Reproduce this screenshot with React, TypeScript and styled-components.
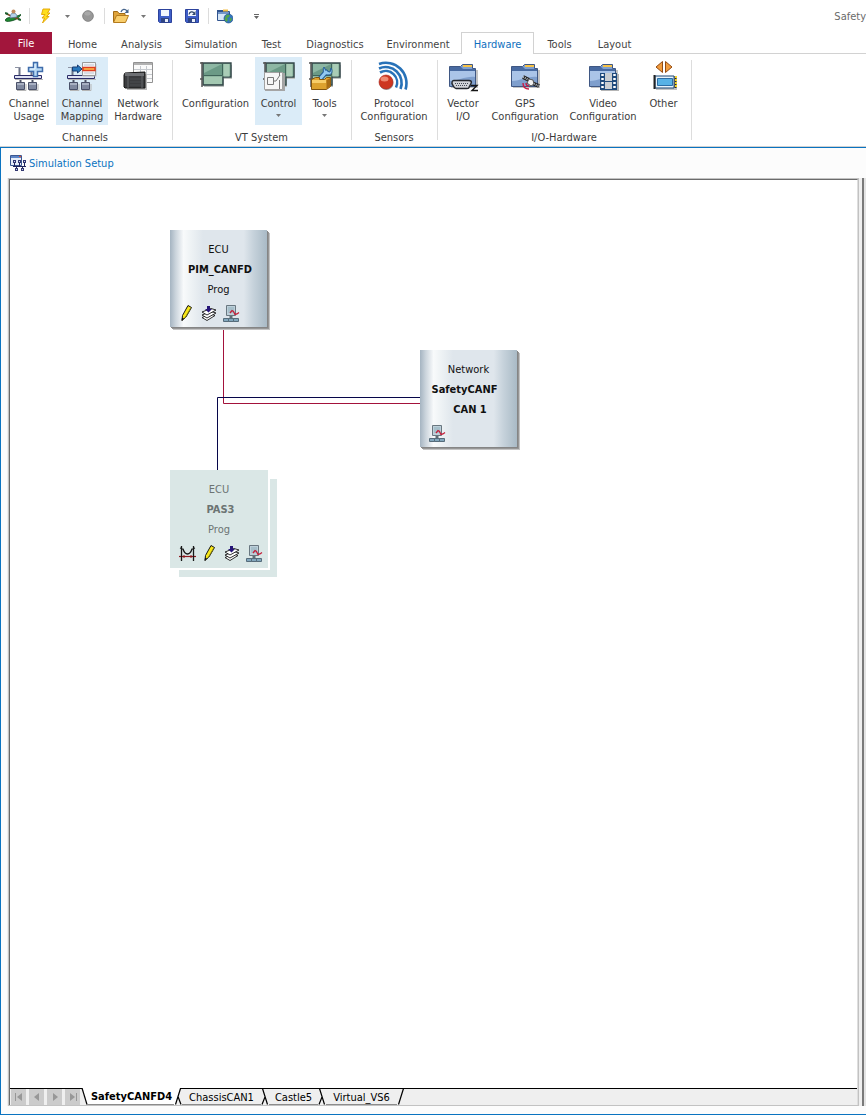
import React from "react";
import styled, { createGlobalStyle } from "styled-components";

const GlobalStyle = createGlobalStyle`
  *, *::before, *::after { box-sizing: border-box; }
  body {
    margin: 0;
    background: #ffffff;
    color: #3b3b3b;
    font-family: "DejaVu Sans Condensed", "Noto Sans", sans-serif;
    font-size: 11px;
    line-height: 13px;
    overflow-x: hidden;
  }
  button {
    margin: 0;
    padding: 0;
    border: 0;
    background: transparent;
    color: inherit;
    font: inherit;
  }
  svg { display: block; flex: none; }
`;

const Page = styled.div`
  display: flex;
  flex-direction: column;
  min-height: 100vh;
`;

/* ---------- Quick access bar ---------- */

const TitleBar = styled.header`
  display: flex;
  align-items: center;
  height: 32px;
  padding-left: 4px;
`;

const QuickGroup = styled.div<{ $gap?: number }>`
  display: flex;
  align-items: center;
  gap: ${(p) => p.$gap ?? 0}px;
`;

const QuickButton = styled.button<{ $narrow?: boolean }>`
  display: flex;
  align-items: center;
  justify-content: center;
  width: ${(p) => (p.$narrow ? 8 : 18)}px;
  height: 20px;
`;

const QuickDivider = styled.span`
  width: 1px;
  height: 16px;
  margin: 0 7px;
  background: #dcdcdc;
`;

const CustomizeButton = styled(QuickButton)`
  margin-left: 18px;
`;

const WindowTitle = styled.h1`
  margin: 0 0 0 auto;
  color: #6a6a6a;
  font-size: 11px;
  font-weight: 400;
  white-space: nowrap;
`;

/* ---------- Ribbon ---------- */

const TabStrip = styled.nav`
  display: flex;
  height: 22px;
  border-bottom: 1px solid #d2d2d2;
`;

const FileTab = styled.button`
  width: 52px;
  height: 22px;
  margin-right: 4px;
  background: #a2163c;
  color: #ffffff;
`;

const RibbonTab = styled.button<{ $width: number; $active?: boolean }>`
  width: ${(p) => p.$width}px;
  height: 22px;
  padding-top: 2px;
  border: ${(p) => (p.$active ? "1px solid #d2d2d2" : "0")};
  border-bottom: 0;
  background: ${(p) => (p.$active ? "#ffffff" : "transparent")};
  color: ${(p) => (p.$active ? "#0e6fbe" : "#444444")};
  white-space: nowrap;
`;

const Ribbon = styled.div`
  display: flex;
  height: 93px;
  padding: 3px 0 2px 3px;
  border-bottom: 1px solid #d0d0d0;
`;

const RibbonGroup = styled.section<{ $inset?: number }>`
  display: flex;
  flex-direction: column;
  justify-content: space-between;
  padding: 0 6px 0 ${(p) => p.$inset ?? 4}px;
  position: relative;

  &::after {
    content: "";
    position: absolute;
    top: 3px;
    bottom: 4px;
    right: 0;
    width: 1px;
    background: #dddddd;
  }
`;

const GroupButtons = styled.div`
  display: flex;
  gap: 1px;
`;

const GroupLabel = styled.h2`
  margin: 0;
  font-size: 11px;
  font-weight: 400;
  line-height: 13px;
  text-align: center;
`;

const CommandButton = styled.button<{ $width: number; $lit?: boolean }>`
  display: flex;
  flex-direction: column;
  align-items: center;
  width: ${(p) => p.$width}px;
  height: 68px;
  padding-top: 4px;
  background: ${(p) => (p.$lit ? "#dbecf8" : "transparent")};
`;

const CommandText = styled.span`
  margin-top: 4px;
  line-height: 13px;
  white-space: pre;
  text-align: center;
`;

const CommandCaret = styled.span`
  margin-top: 4px;
`;

/* ---------- Simulation window ---------- */

const SetupWindow = styled.main`
  display: flex;
  flex: 1;
  flex-direction: column;
  margin-bottom: 1px;
  border: 1px solid #0a73c0;
  border-right: 0;
  background: #fcfcfc;
`;

const WindowCaption = styled.h2`
  display: flex;
  align-items: center;
  gap: 3px;
  height: 30px;
  margin: 0;
  padding-left: 9px;
  color: #0a73c0;
  font-size: 11px;
  font-weight: 400;
`;

const Workspace = styled.div`
  display: flex;
  flex: 1;
  margin: 0 0 8px 6px;
  background: #efefef;
`;

const Pane = styled.div`
  display: flex;
  flex: 1;
  flex-direction: column;
  min-width: 0;
  border-top: 2px solid #6b6b6b;
  border-left: 2px solid #6b6b6b;
  border-right: 2px solid #dedede;
  border-bottom: 1px solid #dedede;
  outline: 1px solid #c2c2c2;
  outline-offset: -1px;
  margin-left: 1px;
`;

const SidePane = styled.div`
  width: 4px;
  margin-left: 3px;
  border-left: 2px solid #7a7a7a;
  background: #e4e4e4;
`;

const Canvas = styled.div`
  position: relative;
  flex: 1;
  min-height: 480px;
  border-bottom: 1px solid #000000;
  background: #ffffff;
`;

const Wires = styled.svg`
  position: absolute;
  top: 0;
  left: 0;
`;

const Node = styled.article<{ $x: number; $y: number; $muted?: boolean }>`
  position: absolute;
  left: ${(p) => p.$x}px;
  top: ${(p) => p.$y}px;
  display: flex;
  flex-direction: column;
  width: ${(p) => (p.$muted ? 98 : 97)}px;
  height: ${(p) => (p.$muted ? 98 : 97)}px;
  padding-top: 10px;
  text-align: center;
  color: ${(p) => (p.$muted ? "#6c7473" : "#101010")};
  background: ${(p) =>
    p.$muted
      ? "#dae7e6"
      : "linear-gradient(90deg, #a5b4c1 0%, #ccd5dd 6%, #f8fafb 14%, #f0f4f6 20%, #dfe6ec 34%, #dfe6ec 76%, #c6d2db 86%, #a9bac6 100%)"};
  box-shadow: ${(p) =>
    p.$muted
      ? "2px 2px 0 #ffffff, 9px 9px 0 #dae7e6"
      : "1px 1px 0 #858585, 2px 2px 0 #969696, 3px 3px 0 #c4c4c4"};
`;

const NodeLine = styled.span<{ $strong?: boolean; $truncated?: boolean }>`
  height: 20px;
  line-height: 20px;
  padding-left: ${(p) => (p.$strong && !p.$truncated ? 3 : 0)}px;
  padding-right: ${(p) => (p.$truncated ? 8 : 0)}px;
  font-weight: ${(p) => (p.$strong ? 700 : 400)};
  white-space: nowrap;
`;

const NodeIcons = styled.div`
  display: flex;
  gap: 6px;
  margin-top: 5px;
  padding-left: 9px;
`;

/* ---------- Sheet tabs ---------- */

const SheetBar = styled.div`
  display: flex;
  height: 16px;
  padding-left: 1px;
`;

const Pager = styled.div`
  display: flex;
  gap: 3px;
  margin-right: 1px;
`;

const PagerButton = styled.button`
  display: flex;
  align-items: center;
  justify-content: center;
  width: 15px;
  height: 16px;
  background: #cbcbcb;
`;

const SheetTab = styled.button<{ $width: number; $active?: boolean }>`
  position: relative;
  width: ${(p) => p.$width}px;
  height: ${(p) => (p.$active ? 17 : 16)}px;
  margin-top: ${(p) => (p.$active ? -1 : 0)}px;
  padding-top: 1px;
  border-bottom: 1px solid #8c8c8c;
  background: ${(p) => (p.$active ? "#ffffff" : "transparent")};
  color: #000000;
  font-weight: ${(p) => (p.$active ? 700 : 400)};
  white-space: nowrap;
`;

const Slant = styled.svg`
  position: relative;
  margin-top: -1px;
`;

/* ---------- Small icons ---------- */

const Caret = () => (
  <svg width="5" height="3" viewBox="0 0 5 3" aria-hidden="true">
    <path d="M0 0h5L2.500 3z" fill="#777" />
  </svg>
);

const CustomizeIcon = () => (
  <svg width="5" height="5" viewBox="0 0 5 5" aria-hidden="true">
    <path d="M0 0h5v1H0zM0 2h5L2.500 5z" fill="#666" />
  </svg>
);

const KayakIcon = () => (
  <svg width="16" height="16" viewBox="0 0 16 16" aria-hidden="true">
    <path d="M0 12.500C1 10 3 9.500 6 9.500S12 8 16 6.500C15 9 12 11.500 8 12.500S2 14 0 12.500z" fill="#1f8a32" stroke="#0c4a1b" strokeWidth=".8" />
    <path d="M1 5.500l4 2 6 2.500 4 1.500" stroke="#7a4423" strokeWidth="1.400" fill="none" />
    <path d="M0 5l3 1M13 11l3 1" stroke="#1d6130" strokeWidth="2" />
    <path d="M5 10c0-3 1-5 3.500-5S12 7 12 9z" fill="#b5d2ea" stroke="#53718c" strokeWidth=".7" />
    <circle cx="8.500" cy="3.500" r="2" fill="#c08a5d" />
  </svg>
);

const BoltIcon = () => (
  <svg width="16" height="16" viewBox="0 0 16 16" aria-hidden="true">
    <path d="M5 1h7L9.500 5H12L8.500 8.500H11L4.500 15l2-5H4l3-3.500H3.500z" fill="#ffdf1c" stroke="#e2a300" strokeWidth=".9" />
  </svg>
);

const RecordIcon = () => (
  <svg width="16" height="16" viewBox="0 0 16 16" aria-hidden="true">
    <circle cx="8" cy="8" r="5.300" fill="#989898" stroke="#858585" />
    <ellipse cx="7.500" cy="5.500" rx="3" ry="2" fill="#a9a9a9" />
  </svg>
);

const OpenIcon = () => (
  <svg width="18" height="16" viewBox="0 0 18 16" aria-hidden="true">
    <path d="M1.500 14V3.500h4l1.500 2h6V8" fill="#dfa33a" stroke="#a16b16" />
    <path d="M1.500 14.500L4.500 7.500h12l-3 7z" fill="#f8cd6b" stroke="#b47b1d" />
    <path d="M9 4c1-3 4-3.500 6-1" fill="none" stroke="#47658c" strokeWidth="1.300" />
    <path d="M16.500 1v4h-4z" fill="#47658c" />
  </svg>
);

const SaveIcon = ({ refresh }: { refresh?: boolean }) => (
  <svg width="16" height="16" viewBox="0 0 16 16" aria-hidden="true">
    <path d="M1.500 1.500h13v13h-12l-1-1z" fill="#3f5fc8" stroke="#2c429c" />
    <path d="M4 2h8v6H4z" fill="#f2f6fd" />
    <path d="M4 10h8v4.500H4z" fill="#2f4583" />
    <path d="M8 11h3v3H8z" fill="#e8eefa" />
    {refresh && (
      <>
        <path d="M5 6.500C5.500 3.500 8.500 3 10 5" fill="none" stroke="#30476b" strokeWidth="1.200" />
        <path d="M11.500 3v4H8z" fill="#30476b" />
      </>
    )}
  </svg>
);

const GlobeWindowIcon = () => (
  <svg width="16" height="16" viewBox="0 0 16 16" aria-hidden="true">
    <path d="M.5 3.500h12v9H.5z" fill="#d7e6f7" stroke="#31548f" />
    <path d="M0 2h6v2H0z" fill="#31548f" />
    <path d="M6 1.500h5v2H6z" fill="#f2bd45" />
    <path d="M1 4h11v2H1z" fill="#7396c9" />
    <circle cx="11.500" cy="10.500" r="4.500" fill="#3477bf" stroke="#1e4c84" strokeWidth=".6" />
    <path d="M9 7.500l2-1 2 1-1.500 2L10 10l1 2-1.500 2-2-2.500zM13 10l2 .5-1 2.500-1.500.5z" fill="#53a748" />
  </svg>
);

const SetupIcon = () => (
  <svg width="16" height="16" viewBox="0 0 16 16" aria-hidden="true">
    <path d="M.5.500h11v10H.5z" fill="#e6edf8" stroke="#3b5790" />
    <path d="M1 1h10v2H1z" fill="#5d84c6" />
    <path d="M9 1h2v1H9z" fill="#e64b2b" />
    <path d="M4.500 8v3M9.500 8v3M14.500 8v3M3 11.500h13M6.500 12v2M12.500 12v2" stroke="#20245c" />
    <path d="M3 5h3v3H3zM8 5h3v3H8zM13 5h3v3h-3zM5 13h3v3H5zM11 13h3v3h-3z" fill="#323771" />
    <path d="M4 6h1v1H4zM9 6h1v1H9zM14 6h1v1h-1zM6 14h1v1H6zM12 14h1v1h-1z" fill="#cbd4ef" />
  </svg>
);

/* ---------- Ribbon icons ---------- */

const BusBase = () => (
  <g>
    <path d="M6.500 6v9M18.500 6v9" stroke="#6d7387" strokeWidth="2" fill="none" />
    <path d="M7.500 17v4M19.500 17v4" stroke="#4c5266" strokeWidth="2" fill="none" />
    <path d="M2 6.500h5" stroke="#8d93a3" strokeWidth="1" />
    <path d="M2 18.500h28" stroke="#b5b5b5" />
    <path d="M1.500 14.500h27v3h-27z" fill="#dfe3f4" stroke="#2b2d68" />
    <path d="M4 29.500h9V23M16 29.500h9V23" fill="none" stroke="#b5b5b5" />
    <path d="M3.500 21.500h8v7h-8zM15.500 21.500h8v7h-8z" fill="#8089a0" stroke="#4a5169" />
    <path d="M4 22h7v2H4zM16 22h7v2h-7z" fill="#a8b0c2" />
  </g>
);

const ChannelUsageIcon = () => (
  <>
    <BusBase />
    <path d="M20.500 1.500h4v5h5v4h-5v5h-4v-5h-5v-4h5z" fill="#b7d9f4" stroke="#3f6cab" strokeWidth="1.500" />
    <path d="M22 3v5h-5" fill="none" stroke="#ecf7ff" />
  </>
);

const ChannelMappingIcon = () => (
  <>
    <BusBase />
    <path d="M17 3h13.500v12.500H17z" fill="#bcc3cb" />
    <path d="M16.500 1.500h13v13h-13z" fill="#f3f4f7" stroke="#9b9b9b" />
    <path d="M18 4h10M18 12h10" stroke="#bfc5d1" />
    <path d="M17 6.500h12v3H17z" fill="#ffc24a" stroke="#df3e20" strokeWidth="1.500" />
    <path d="M6.500 6h5V4l4.500 4-4.500 4v-2h-5z" fill="#2978bd" stroke="#173d74" />
  </>
);

const NetworkHardwareIcon = () => (
  <>
    <path d="M11.500 1.500h19v20h-19z" fill="#fafafa" stroke="#929292" />
    <path d="M12 2h18v2H12z" fill="#b1b1b1" />
    <path d="M12 8.500h18M12 13.500h18M12 17.500h18M18.500 5v16M24.500 5v16" stroke="#c5c9ce" />
    <path d="M5 13h20v16H5z" fill="#b9b9b9" />
    <path d="M3 12l20-1v16H3l-1-1V14z" fill="#3b3c3f" stroke="#151515" />
    <path d="M6 12v15M20 12v15" stroke="#66686c" />
    <path d="M3 12h19v3H3z" fill="#6e7074" />
    <path d="M8 18h11M8 21h11M8 24h11" stroke="#4a4c50" />
  </>
);

const Board = () => (
  <g>
    <path d="M4 4h28v14h-8v8H4z" fill="#bfc4c1" />
    <path d="M3 2h28v14h-8v8H3z" fill="#7aa68f" stroke="#34474a" strokeWidth="1.400" />
    <path d="M4 3h18v11H4z" fill="#6b9a86" />
    <path d="M4 3h18L4 12z" fill="#8db7a3" />
    <path d="M23.500 3v12.500h6V3z" fill="#a9ccb6" />
    <path d="M4 15.500h18v7.500H4z" fill="#a3c8b1" />
    <path d="M4 14.500h18.500V3" fill="none" stroke="#3f6459" />
    <path d="M0 2h3M2 1v25M0 18h3" stroke="#555" strokeWidth="1.500" fill="none" />
  </g>
);

const ControlBoardIcon = () => (
  <>
    <Board />
    <path d="M2 12h20v18H2z" fill="#a5a5a5" />
    <path d="M1.500 11.500h18v17h-18z" fill="#f6f6f6" stroke="#a2a2a2" />
    <path d="M4.500 16.500h6v7h-6zM10 20h3l4-6M16.500 19v9M16.500 11v4" fill="none" stroke="#777" />
  </>
);

const ToolsBoardIcon = () => (
  <>
    <Board />
    <path d="M10 19l7-8" stroke="#235c97" strokeWidth="5" strokeLinecap="round" />
    <path d="M15 6l2 4 4 1 1-4c2 3 1 7-3 7s-6-4-4-8z" fill="#92caf1" stroke="#235c97" />
    <path d="M10 19l7-8" stroke="#92caf1" strokeWidth="3" strokeLinecap="round" />
    <path d="M2.500 18.500l4-2h4v2h5l2-2h4v9l-4 3h-15z" fill="#dda22e" stroke="#815510" />
    <path d="M3 19h14v3H3z" fill="#f8ce69" />
    <path d="M17.500 19v9l4-3v-8z" fill="#a96d14" />
  </>
);

const ProtocolIcon = () => (
  <>
    <g fill="none" stroke="#2872b8" strokeWidth="2.600">
      <path d="M2 11.500A11.500 11.500 0 0 1 18 26.500" />
      <path d="M1 7.500A16 16 0 0 1 22.500 28" />
      <path d="M1 3A20.500 20.500 0 0 1 27.500 28.500" />
    </g>
    <circle cx="8.500" cy="22" r="7" fill="#a1a1a1" />
    <circle cx="8" cy="21" r="7" fill="#cd3620" stroke="#a8231a" strokeWidth=".6" />
    <ellipse cx="6.500" cy="18" rx="4" ry="2.500" fill="#ed8a72" />
  </>
);

const Folder = () => (
  <g>
    <path d="M4 9h27v18H4z" fill="#c4c4c4" />
    <path d="M2.500 25.500V5.500h11l2-2h10v4h3v18z" fill="#7f9fcd" stroke="#3f5783" />
    <path d="M16 4h9v2h-9z" fill="#f6c247" />
    <path d="M3 6h11l2 2h12v2H3z" fill="#486aa1" />
    <path d="M3 10h25v6C18 15 12 20 3 20z" fill="#aac4e8" />
  </g>
);

const VectorIoIcon = () => (
  <>
    <Folder />
    <path d="M7 19.500h15c2 0 3 1 2 3l-2 4c0 1-1 1-2 1H9c-1 0-2-1-3-3l-1-2c0-2 0-3 2-3z" fill="#d1d3d8" stroke="#24272d" strokeWidth="1.500" />
    <path d="M8 22.500h14M9 24.500h12" stroke="#444955" strokeDasharray="1 1" />
    <path d="M24 24.500h6l-5 5h6" fill="none" stroke="#151515" strokeWidth="1.400" />
  </>
);

const GpsIcon = () => (
  <>
    <Folder />
    <path d="M14 16l6 3M23 22l7 3" stroke="#222" strokeWidth="4" />
    <path d="M14 16l6 3M23 22l7 3" stroke="#b8c0cc" strokeWidth="2" strokeDasharray="1 1" />
    <path d="M20 18l4 1 1 4-3 2-4-3z" fill="#f2f2f2" stroke="#555" />
    <path d="M14 22c0 4 2 6 6 6M17 22c0 2 1 3 3 3" fill="none" stroke="#c71e47" strokeWidth="1.400" />
  </>
);

const VideoIcon = () => (
  <>
    <Folder />
    <path d="M14 13h18v17H14z" fill="#b5b5b5" />
    <path d="M13 12h17v17H13z" fill="#204a7c" />
    <path d="M18 12h7v8h-7zM18 21h7v7h-7z" fill="#c9cdd2" />
    <path d="M15.500 13v16M27.500 13v16" stroke="#fff" strokeWidth="2.500" strokeDasharray="2 2" />
  </>
);

const OtherIcon = () => (
  <>
    <path d="M14.500.500v11L8 6zM17.500.500v11L24 6z" fill="#f29c3d" stroke="#924b14" />
    <path d="M8 17h21v12H8z" fill="#c4c4c4" />
    <path d="M7 15h19v12H7z" fill="#e8f3fb" stroke="#1b4775" />
    <path d="M9.500 17.500h15v7h-15z" fill="#58b2e6" stroke="#2b6da5" />
    <path d="M6.500 14v14" stroke="#222" strokeWidth="2" />
    <path d="M27.500 15v12" stroke="#2b2b2b" strokeWidth="2" />
    <path d="M28 15v12" stroke="#f3d329" strokeWidth="2" strokeDasharray="2 1" />
  </>
);

/* ---------- Node icons ---------- */

const PencilIcon = () => (
  <svg width="16" height="16" viewBox="0 0 16 16" aria-label="Edit">
    <path d="M9 .500l3.500 2L7 12l-4 3.500.500-5z" fill="#f8e719" stroke="#161616" />
    <path d="M11.500 3.500L6 13" stroke="#858013" />
    <path d="M3 12.500l2 1-2.500 2.500z" fill="#111" />
  </svg>
);

const StackIcon = () => (
  <svg width="16" height="16" viewBox="0 0 16 16" aria-label="Layers">
    <g fill="#fff" stroke="#161616" strokeWidth=".9">
      <path d="M1 12.500l9-3.500 4 1.500-8 5z" />
      <path d="M1 10l9-3.500 5 1.500-9 5z" />
      <path d="M1 7l9-3.500 5 1.500-9 5z" />
    </g>
    <path d="M6 1h3v3h2L7.500 7.500 4 4h2z" fill="#251477" />
  </svg>
);

const MonitorIcon = () => (
  <svg width="17" height="17" viewBox="0 0 17 17" aria-label="Measurement">
    <path d="M3.500.500h9v10h-9z" fill="#bed0da" stroke="#697780" />
    <path d="M5 2h6v6H5z" fill="#a6bfca" />
    <path d="M8 11v3" stroke="#5f6c75" strokeWidth="3" />
    <path d="M.5 13.500h5v3h-5zM5.500 13.500h5v3h-5zM10.500 13.500h5v3h-5z" fill="#82a7bd" stroke="#566c7b" />
    <path d="M7 8l2-2.500 1.500 1 1.500 3 2-.5 2-1.500" fill="none" stroke="#c51d38" strokeWidth="1.300" />
  </svg>
);

const SignalIcon = () => (
  <svg width="17" height="16" viewBox="0 0 17 16" aria-label="Signals">
    <path d="M0 11.500h17" stroke="#8e1b20" strokeWidth="1.200" />
    <path d="M2.500 1v15M14.500 1v15M1 3l3 1c1 3 2 5 4.500 5S12 7 13 4l3-1" fill="none" stroke="#171717" strokeWidth="1.300" />
    <path d="M4.500 10L6 11.500 4.500 13M12.500 10L11 11.500l1.500 1.500" fill="none" stroke="#8e1b20" />
  </svg>
);

/* ---------- Data ---------- */

type Command = { label: string; width: number; icon: React.ReactNode; lit?: boolean; menu?: boolean };
type Group = { label: string; inset?: number; commands: Command[] };

const ribbonTabs = [
  { label: "Home", width: 53 },
  { label: "Analysis", width: 65 },
  { label: "Simulation", width: 74 },
  { label: "Test", width: 47 },
  { label: "Diagnostics", width: 80 },
  { label: "Environment", width: 86 },
  { label: "Hardware", width: 73, active: true },
  { label: "Tools", width: 51 },
  { label: "Layout", width: 59 },
];

const groups: Group[] = [
  {
    label: "Channels",
    inset: 0,
    commands: [
      { label: "Channel\nUsage", width: 52, icon: <ChannelUsageIcon /> },
      { label: "Channel\nMapping", width: 52, icon: <ChannelMappingIcon />, lit: true },
      { label: "Network\nHardware", width: 58, icon: <NetworkHardwareIcon /> },
    ],
  },
  {
    label: "VT System",
    commands: [
      { label: "Configuration", width: 77, icon: <Board /> },
      { label: "Control", width: 47, icon: <ControlBoardIcon />, lit: true, menu: true },
      { label: "Tools", width: 43, icon: <ToolsBoardIcon />, menu: true },
    ],
  },
  {
    label: "Sensors",
    commands: [{ label: "Protocol\nConfiguration", width: 76, icon: <ProtocolIcon /> }],
  },
  {
    label: "I/O-Hardware",
    commands: [
      { label: "Vector\nI/O", width: 42, icon: <VectorIoIcon /> },
      { label: "GPS\nConfiguration", width: 80, icon: <GpsIcon /> },
      { label: "Video\nConfiguration", width: 74, icon: <VideoIcon /> },
      { label: "Other", width: 45, icon: <OtherIcon /> },
    ],
  },
];

const LINE = "#000000";

export default function App() {
  return (
    <Page>
      <GlobalStyle />
      <TitleBar>
        <QuickButton aria-label="Application"><KayakIcon /></QuickButton>
        <QuickDivider />
        <QuickGroup $gap={8}>
          <QuickButton aria-label="Start"><BoltIcon /></QuickButton>
          <QuickButton $narrow aria-label="Start options"><Caret /></QuickButton>
          <QuickButton aria-label="Stop"><RecordIcon /></QuickButton>
        </QuickGroup>
        <QuickDivider />
        <QuickGroup $gap={9}>
          <QuickButton aria-label="Open"><OpenIcon /></QuickButton>
          <QuickButton $narrow aria-label="Recent files"><Caret /></QuickButton>
          <QuickButton aria-label="Save"><SaveIcon /></QuickButton>
          <QuickButton aria-label="Save as"><SaveIcon refresh /></QuickButton>
        </QuickGroup>
        <QuickDivider />
        <QuickButton aria-label="Desktop"><GlobeWindowIcon /></QuickButton>
        <CustomizeButton $narrow aria-label="Customize toolbar"><CustomizeIcon /></CustomizeButton>
        <WindowTitle>Safety</WindowTitle>
      </TitleBar>

      <TabStrip>
        <FileTab>File</FileTab>
        {ribbonTabs.map((tab) => (
          <RibbonTab key={tab.label} $width={tab.width} $active={tab.active}>
            {tab.label}
          </RibbonTab>
        ))}
      </TabStrip>

      <Ribbon>
        {groups.map((group) => (
          <RibbonGroup key={group.label} $inset={group.inset}>
            <GroupButtons>
              {group.commands.map((command) => (
                <CommandButton key={command.label} $width={command.width} $lit={command.lit}>
                  <svg width="32" height="32" viewBox="0 0 32 32" aria-hidden="true">
                    {command.icon}
                  </svg>
                  <CommandText>{command.label}</CommandText>
                  {command.menu && <CommandCaret><Caret /></CommandCaret>}
                </CommandButton>
              ))}
            </GroupButtons>
            <GroupLabel>{group.label}</GroupLabel>
          </RibbonGroup>
        ))}
      </Ribbon>

      <SetupWindow>
        <WindowCaption>
          <SetupIcon />
          Simulation Setup
        </WindowCaption>
        <Workspace>
          <Pane>
            <Canvas>
              <Wires width="520" height="400" viewBox="0 0 520 400" aria-hidden="true">
                <path d="M213.500 150v73.500H411" fill="none" stroke="#a3123b" />
                <path d="M207.500 290v-72.500H411" fill="none" stroke="#06064a" />
              </Wires>
              <Node $x={160} $y={50}>
                <NodeLine>ECU</NodeLine>
                <NodeLine $strong>PIM_CANFD</NodeLine>
                <NodeLine>Prog</NodeLine>
                <NodeIcons>
                  <PencilIcon />
                  <StackIcon />
                  <MonitorIcon />
                </NodeIcons>
              </Node>
              <Node $x={410} $y={170}>
                <NodeLine>Network</NodeLine>
                <NodeLine $strong $truncated>SafetyCANF</NodeLine>
                <NodeLine $strong>CAN 1</NodeLine>
                <NodeIcons>
                  <MonitorIcon />
                </NodeIcons>
              </Node>
              <Node $x={160} $y={290} $muted>
                <NodeLine>ECU</NodeLine>
                <NodeLine $strong>PAS3</NodeLine>
                <NodeLine>Prog</NodeLine>
                <NodeIcons>
                  <SignalIcon />
                  <PencilIcon />
                  <StackIcon />
                  <MonitorIcon />
                </NodeIcons>
              </Node>
            </Canvas>
            <SheetBar>
              <Pager>
                <PagerButton aria-label="First sheet">
                  <svg width="8" height="8" viewBox="0 0 8 8"><path d="M0 0h1v8H0zM7 0v8L2 4z" fill="#979797" /></svg>
                </PagerButton>
                <PagerButton aria-label="Previous sheet">
                  <svg width="8" height="8" viewBox="0 0 8 8"><path d="M6 0v8L1 4z" fill="#979797" /></svg>
                </PagerButton>
                <PagerButton aria-label="Next sheet">
                  <svg width="8" height="8" viewBox="0 0 8 8"><path d="M2 0v8l5-4z" fill="#979797" /></svg>
                </PagerButton>
                <PagerButton aria-label="Last sheet">
                  <svg width="8" height="8" viewBox="0 0 8 8"><path d="M7 0h1v8H7zM1 0v8l5-4z" fill="#979797" /></svg>
                </PagerButton>
              </Pager>
              <Slant width="8" height="17" viewBox="0 0 8 17" aria-hidden="true">
                <path d="M1 0h7v17H6z" fill="#fff" />
                <path d="M1 0l5 16.500" fill="none" stroke={LINE} strokeWidth="1.200" />
                <path d="M6 16.500h2" stroke="#8c8c8c" />
              </Slant>
              <SheetTab $width={85} $active>SafetyCANFD4</SheetTab>
              <Slant width="8" height="17" viewBox="0 0 8 17" aria-hidden="true">
                <path d="M0 0h6.500L1.500 17H0z" fill="#fff" />
                <path d="M6.500.500L1.500 16.500M4 8.500l3 8M6 .500h2" fill="none" stroke={LINE} strokeWidth="1.200" />
              </Slant>
              <SheetTab $width={79}>ChassisCAN1</SheetTab>
              <Slant width="8" height="17" viewBox="0 0 8 17" aria-hidden="true">
                <path d="M1.500.500l5 16M4 9l-3 7.500" fill="none" stroke={LINE} strokeWidth="1.200" />
              </Slant>
              <SheetTab $width={49}>Castle5</SheetTab>
              <Slant width="8" height="17" viewBox="0 0 8 17" aria-hidden="true">
                <path d="M1.500.500l5 16M4 9l-3 7.500" fill="none" stroke={LINE} strokeWidth="1.200" />
              </Slant>
              <SheetTab $width={71}>Virtual_VS6</SheetTab>
              <Slant width="8" height="17" viewBox="0 0 8 17" aria-hidden="true">
                <path d="M6.500.500l-5 16" fill="none" stroke={LINE} strokeWidth="1.200" />
              </Slant>
            </SheetBar>
          </Pane>
          <SidePane />
        </Workspace>
      </SetupWindow>
    </Page>
  );
}
